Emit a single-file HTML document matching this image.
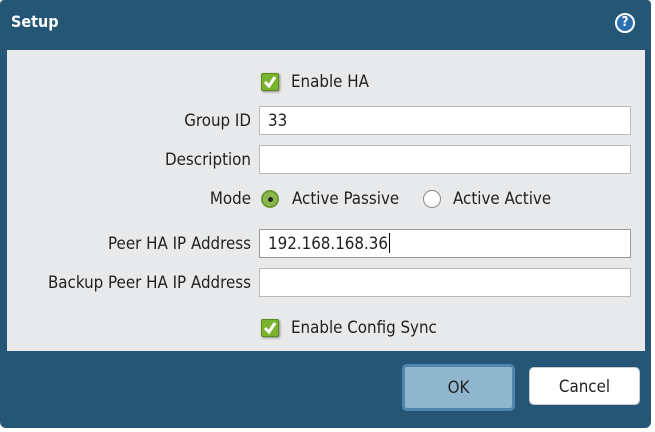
<!DOCTYPE html>
<html><head><style>
body{margin:0;width:655px;height:432px;background:#fff;font-family:"DejaVu Sans Condensed","Liberation Sans",sans-serif;font-size:16.8px;color:#222;position:relative;overflow:hidden}
.dlg{position:absolute;left:0;top:0;width:651px;height:428px;background:#265676;border-radius:4px 4px 6px 6px}
.title{position:absolute;left:11px;top:12px;color:#fff;font-weight:bold;font-size:16px}
.help{position:absolute;left:615px;top:13px;width:20px;height:20px;border-radius:50%;background:#2b6fb0;border:2px solid #fff;box-sizing:border-box;color:#fff;font-weight:bold;font-size:13px;text-align:center;line-height:16px}
.panel{position:absolute;left:7px;top:50px;width:638px;height:301px;background:#e8e9ea}
.lbl{position:absolute;right:400px;text-align:right;white-space:nowrap}
.inp{position:absolute;left:259px;width:372px;height:29px;background:#fff;border:1px solid #bbb;box-sizing:border-box;padding-left:8px;line-height:27px}
.cb{position:absolute;left:261px;width:18px;height:18px;background:#7ab32e;border:1px solid #5a8a20;box-sizing:border-box;border-radius:2px;box-shadow:1px 1px 2px #888}
.cb svg{position:absolute;left:1px;top:1px}
.t{position:absolute;white-space:nowrap}
.rad{position:absolute;width:18px;height:18px;border-radius:50%;box-sizing:border-box}
.btn{position:absolute;text-align:center;border-radius:5px;box-sizing:border-box}
</style></head><body>
<div class="dlg">
<div class="title">Setup</div>
<div class="help">?</div>
<div class="panel"></div>
<div class="cb" style="top:73px"><svg width="14" height="14"><path d="M2 7 L6 11 L12 2" stroke="#fff" stroke-width="3" fill="none"/></svg></div>
<div class="t" style="left:291px;top:71px">Enable HA</div>
<div class="lbl" style="top:110px">Group ID</div>
<div class="inp" style="top:106px">33</div>
<div class="lbl" style="top:149px">Description</div>
<div class="inp" style="top:145px"></div>
<div class="lbl" style="top:188px">Mode</div>
<div class="rad" style="left:261px;top:190px;background:#8ab84a;border:2px solid #6d9a36"><div style="position:absolute;left:5px;top:5px;width:5px;height:5px;border-radius:50%;background:#222"></div></div>
<div class="t" style="left:292px;top:188px">Active Passive</div>
<div class="rad" style="left:423px;top:190px;background:#fff;border:1px solid #888"></div>
<div class="t" style="left:453px;top:188px">Active Active</div>
<div class="lbl" style="top:233px">Peer HA IP Address</div>
<div class="inp" style="top:229px;border-color:#999">192.168.168.36<span style="border-left:1px solid #000;margin-left:1px"></span></div>
<div class="lbl" style="top:272px">Backup Peer HA IP Address</div>
<div class="inp" style="top:268px"></div>
<div class="cb" style="top:319px"><svg width="14" height="14"><path d="M2 7 L6 11 L12 2" stroke="#fff" stroke-width="3" fill="none"/></svg></div>
<div class="t" style="left:291px;top:317px">Enable Config Sync</div>
<div class="btn" style="left:402px;top:364px;width:113px;height:47px;background:#8fb6cd;border:3px solid #4d87ad;line-height:41px">OK</div>
<div class="btn" style="left:529px;top:367px;width:111px;height:38px;background:#fff;border:1px solid #ccc;line-height:36px">Cancel</div>
</div>
</body></html>
